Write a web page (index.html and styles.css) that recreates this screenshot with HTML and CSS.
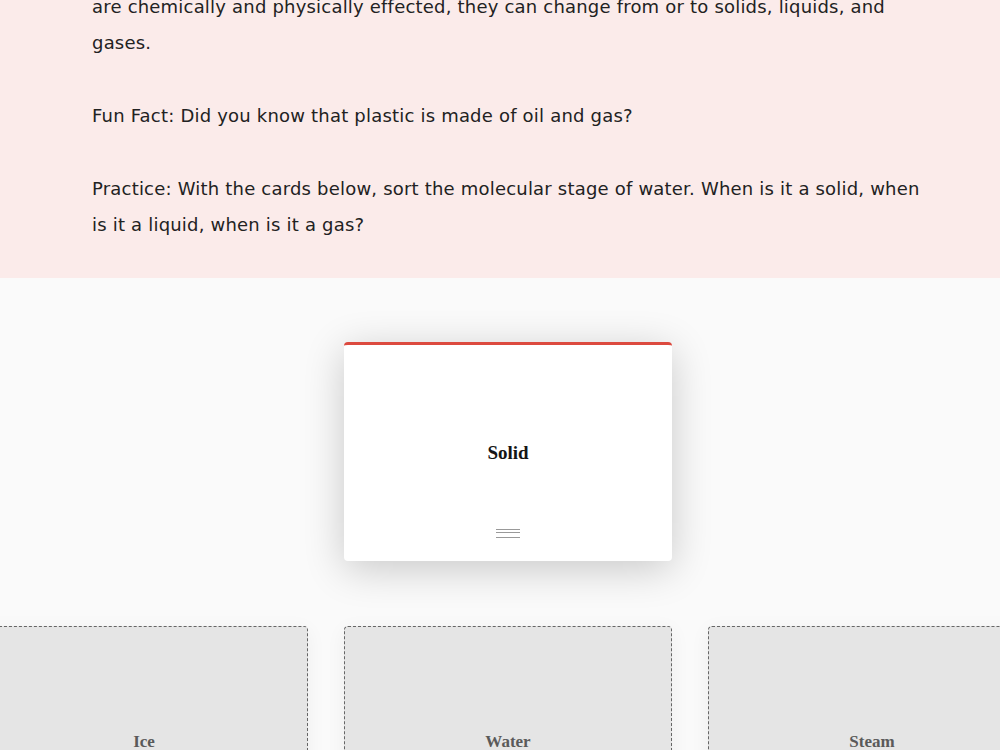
FILE: index.html
```html
<!DOCTYPE html>
<html lang="en">
<head>
<meta charset="utf-8">
<title>States of Matter</title>
<link rel="stylesheet" href="styles.css">
</head>
<body>
<section class="intro">
  <div class="intro-inner">
    <p class="para first"><span class="ln">are chemically and physically effected, they can change from or to solids, liquids, and</span><br><span class="ln">gases.</span></p>
    <p class="para"><span class="ln">Fun Fact: Did you know that plastic is made of oil and gas?</span></p>
    <p class="para"><span class="ln">Practice: With the cards below, sort the molecular stage of water. When is it a solid, when</span><br><span class="ln">is it a liquid, when is it a gas?</span></p>
  </div>
</section>
<section class="sorter">
  <div class="deck">
    <div class="card">
      <div class="card-label">Solid</div>
      <div class="handle"><span></span><span></span><span></span></div>
    </div>
  </div>
  <div class="zones">
    <div class="zone"><div class="zone-label">Ice</div></div>
    <div class="zone"><div class="zone-label">Water</div></div>
    <div class="zone"><div class="zone-label">Steam</div></div>
  </div>
</section>
</body>
</html>
```
FILE: styles.css
```css
html, body {
  margin: 0;
  padding: 0;
  overflow: hidden;
}
body {
  width: 1000px;
  height: 750px;
  background: #fafafa;
}
.intro {
  background: #fbebea;
  padding-bottom: 35px;
}
.intro-inner {
  width: 832px;
  margin-left: 92px;
  font-family: "DejaVu Sans", sans-serif;
  font-size: 18px;
  letter-spacing: 0.2px;
  line-height: 36px;
  color: #222;
}
.para {
  margin: 37px 0 0 0;
  white-space: nowrap;
}
.para.first {
  margin-top: -11px;
}
.sorter {
  padding-top: 64px;
}
.deck {
  display: flex;
  justify-content: center;
  padding-left: 16px;
}
.card {
  width: 328px;
  height: 216px;
  background: #fff;
  border-top: 3px solid #dc4a3f;
  border-radius: 4px;
  box-shadow: 0 8px 40px rgba(0, 0, 0, 0.2);
  position: relative;
  display: flex;
  align-items: center;
  justify-content: center;
}
.card-label {
  font-family: "Liberation Serif", serif;
  font-weight: bold;
  font-size: 19px;
  color: #151515;
  margin-top: 0;
}
.handle {
  position: absolute;
  left: 152px;
  top: 184px;
  width: 24px;
  display: flex;
  flex-direction: column;
  gap: 2px;
}
.handle span {
  display: block;
  height: 1px;
  background: #999;
}
.handle span:last-child {
  margin-top: 2px;
}
.zones {
  display: flex;
  gap: 36px;
  margin-top: 65px;
  margin-left: -20px;
  width: 1056px;
}
.zone {
  flex: 0 0 328px;
  box-sizing: border-box;
  height: 220px;
  background: #e5e5e5;
  border: 1px dashed #666;
  border-radius: 4px;
  box-shadow: 0 4px 20px rgba(0, 0, 0, 0.05);
  display: flex;
  justify-content: center;
  padding-top: 105px;
}
.zone-label {
  font-family: "Liberation Serif", serif;
  font-weight: bold;
  font-size: 17px;
  color: #5a5a5a;
}
```
